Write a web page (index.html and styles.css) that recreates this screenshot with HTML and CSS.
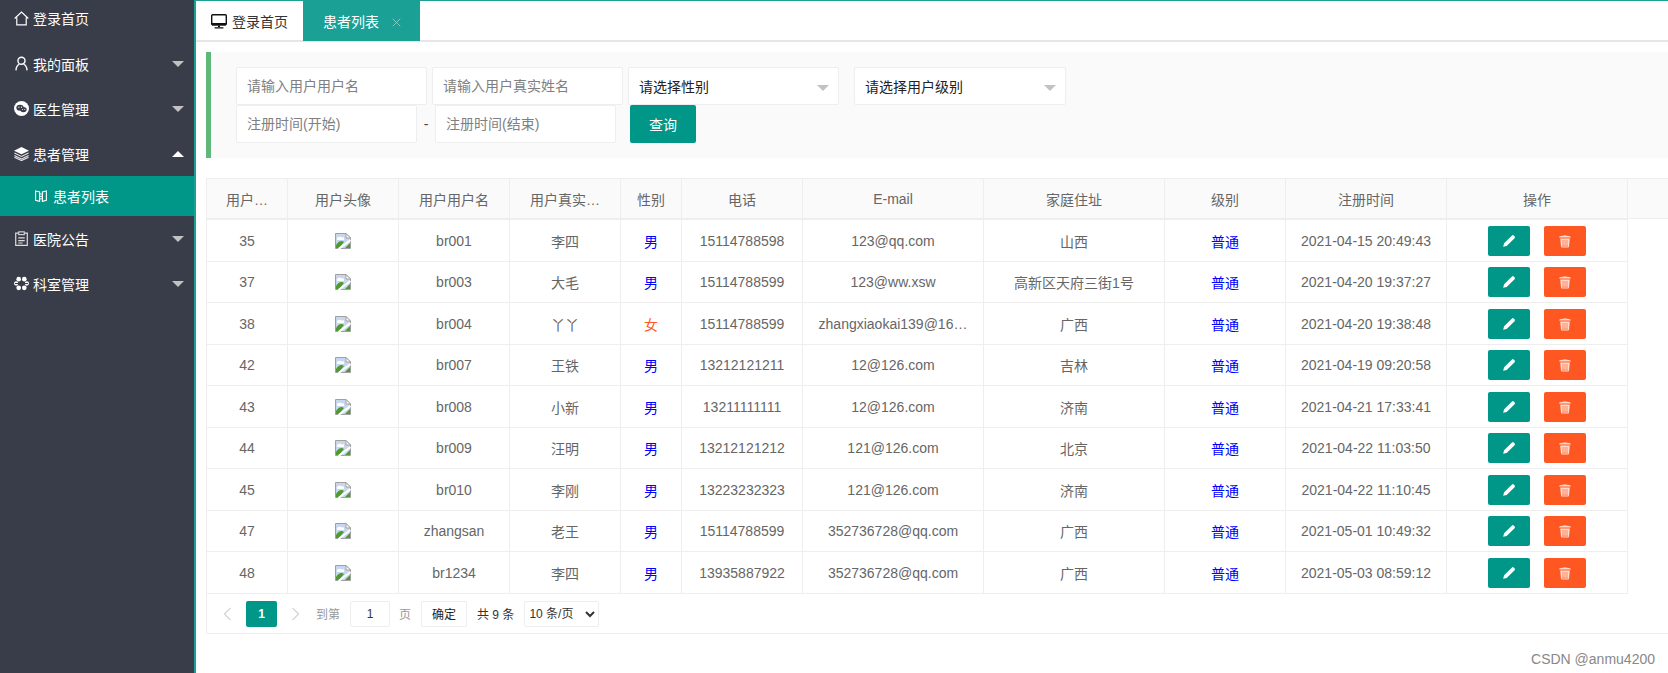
FILE: index.html
```html
<!DOCTYPE html>
<html lang="zh-CN">
<head>
    <meta charset="UTF-8">
    <title>患者列表</title>
    <link rel="stylesheet" href="styles.css">
</head>
<body>
    <svg class="defs" width="0" height="0">
        <symbol id="broken" viewBox="0 0 16 16">
            <path d="M0.5 0.5H11L15.5 5V15.5H0.5Z" fill="#c9d7ee" stroke="#a0a0a0"/>
            <path d="M11 0.5V5H15.5Z" fill="#fff" stroke="#a0a0a0"/>
            <path d="M2 5q2-2 4-1t3 0v3H2Z" fill="#fff"/>
            <path d="M1 15V12Q5 6 9 9L4 15Z" fill="#4f9a2f"/>
            <path d="M10 15L15 10V15Z" fill="#4f9a2f"/>
            <path d="M3.5 16L15.5 7" stroke="#fff" stroke-width="2"/>
        </symbol>
        <symbol id="pen" viewBox="0 0 12 12">
            <path d="M1 11L1.8 8L8.6 1.2Q9.4 0.6 10.2 1.4L10.8 2Q11.4 2.8 10.8 3.6L4 10.2Z" fill="#fff"/>
        </symbol>
        <symbol id="trash" viewBox="0 0 14 14">
            <path d="M1 3.6Q1 2 3 2L5 1.8Q7 0.6 9 1.8L11 2Q13 2 13 3.6Z" fill="#ffd9cb"/>
            <path d="M2.2 4.6H11.8L11 12.4Q11 13.4 10 13.4H4Q3 13.4 3 12.4Z" fill="#ffd9cb"/>
            <path d="M5 6V11M7 6V11M9 6V11" stroke="#ff8a63" stroke-width="1"/>
            <path d="M4 12H10" stroke="#ff5722" stroke-width="0.8"/>
        </symbol>
    </svg>

    <div class="layout">
        <div class="side">
            <div class="nav-item first">
                <svg class="nav-icon" viewBox="0 0 14 14"><path d="M0.6 7L7 1L13.4 7M2.6 6V13H11.4V6M2.6 13H11.4" fill="none" stroke="#fff" stroke-width="1.1"/></svg>
                <span>登录首页</span>
            </div>
            <div class="nav-item">
                <svg class="nav-icon" viewBox="0 0 14 14"><circle cx="7" cy="4.4" r="3.3" fill="none" stroke="#fff" stroke-width="1.3"/><path d="M1.8 13.4Q2.2 8.6 5 7.8M12.2 13.4Q11.8 8.6 9 7.8" fill="none" stroke="#fff" stroke-width="1.3"/></svg>
                <span>我的面板</span>
                <i class="arrow"></i>
            </div>
            <div class="nav-item">
                <svg class="nav-icon" viewBox="0 0 14 14"><circle cx="7" cy="7" r="7" fill="#fff"/><ellipse cx="5.6" cy="6.2" rx="3.4" ry="2.8" fill="#393d49"/><ellipse cx="8.8" cy="8" rx="3" ry="2.4" fill="#393d49"/><circle cx="4.6" cy="5.8" r=".6" fill="#fff"/><circle cx="7" cy="5.8" r=".6" fill="#fff"/><circle cx="8" cy="8" r=".5" fill="#fff"/><circle cx="10" cy="8" r=".5" fill="#fff"/></svg>
                <span>医生管理</span>
                <i class="arrow"></i>
            </div>
            <div class="nav-item">
                <svg class="nav-icon" viewBox="0 0 14 14"><path d="M7 1L14 4.4L7 7.8L0 4.4Z" fill="#fff"/><path d="M0.4 6.6L7 9.8L13.6 6.6M0.4 8.8L7 12L13.6 8.8M0.4 10.6L7 13.6L13.6 10.6" fill="none" stroke="#e8e8e8" stroke-width="1"/></svg>
                <span>患者管理</span>
                <i class="arrow up"></i>
            </div>
            <div class="nav-sub">
                <svg class="sub-icon" viewBox="0 0 12 12"><path d="M0.6 1L4.6 2V11.4L0.6 10.4ZM11.4 1L7.4 2V11.4L11.4 10.4Z" fill="none" stroke="#fff" stroke-width="1.1"/><path d="M4.6 4H7.4M4.6 6.4H7.4M4.6 8.8H7.4" stroke="#fff" stroke-width=".9"/></svg>
                <span>患者列表</span>
            </div>
            <div class="nav-item">
                <svg class="nav-icon" viewBox="0 0 14 14"><path d="M4 2H1.6V13.4H12.4V2H10" fill="none" stroke="#ddd" stroke-width="1.1"/><rect x="4.4" y="0.8" width="5.2" height="2.6" fill="none" stroke="#ddd"/><path d="M4 6.4H10M4 9H10M4 11.2H8" stroke="#ddd"/></svg>
                <span>医院公告</span>
                <i class="arrow"></i>
            </div>
            <div class="nav-item">
                <svg class="nav-icon" viewBox="0 0 14 14"><g fill="#fff"><circle cx="4.4" cy="3" r="2.2"/><circle cx="9.6" cy="3" r="2.2"/><circle cx="4.4" cy="11" r="2.2"/><circle cx="9.6" cy="11" r="2.2"/><circle cx="2" cy="7" r="2"/><circle cx="12" cy="7" r="2"/></g><path d="M7 1V13M1 7H13" stroke="#393d49" stroke-width="1"/></svg>
                <span>科室管理</span>
                <i class="arrow"></i>
            </div>
        </div>

        <div class="main">
            <div class="tabs">
                <div class="tab">
                    <svg class="tab-icon" viewBox="0 0 16 15"><rect x="0.7" y="0.7" width="14.6" height="10" rx="1" fill="none" stroke="#111" stroke-width="1.4"/><rect x="1" y="9" width="14" height="2.4" fill="#111"/><path d="M7 11.4H9V13H7ZM3.6 13.2H12.4V14.4H3.6Z" fill="#111"/></svg>
                    <span>登录首页</span>
                </div>
                <div class="tab active">
                    <span>患者列表</span>
                    <svg class="tab-close" viewBox="0 0 10 10"><path d="M0.8 0.8L9.2 9.2M9.2 0.8L0.8 9.2" stroke="#8fd0c9" stroke-width="1"/></svg>
                </div>
            </div>

            <div class="search">
                <div class="search-row">
                    <input class="field w191" placeholder="请输入用户用户名">
                    <input class="field w191" placeholder="请输入用户真实姓名">
                    <div class="select w211">请选择性别<i class="select-arrow"></i></div>
                    <div class="select w212">请选择用户级别<i class="select-arrow"></i></div>
                </div>
                <div class="search-row">
                    <input class="field w181" placeholder="注册时间(开始)">
                    <span class="dash">-</span>
                    <input class="field w181" placeholder="注册时间(结束)">
                    <button class="search-btn">查询</button>
                </div>
            </div>

            <div class="grid">
                <div class="grid-head">
                    <table>
                        <colgroup>
                            <col class="c-id"><col class="c-m"><col class="c-m"><col class="c-m"><col class="c-sex"><col class="c-tel"><col class="c-l"><col class="c-l"><col class="c-tel"><col class="c-time"><col class="c-l"><col class="c-gap">
                        </colgroup>
                        <tr>
                            <th>用户…</th><th>用户头像</th><th>用户用户名</th><th>用户真实…</th><th>性别</th><th>电话</th><th>E-mail</th><th>家庭住址</th><th>级别</th><th>注册时间</th><th>操作</th><th></th>
                        </tr>
                    </table>
                </div>
                <div class="grid-body">
                    <table>
                        <colgroup>
                            <col class="c-id"><col class="c-m"><col class="c-m"><col class="c-m"><col class="c-sex"><col class="c-tel"><col class="c-l"><col class="c-l"><col class="c-tel"><col class="c-time"><col class="c-l">
                        </colgroup>
                        <tr class="tall">
                            <td>35</td><td><svg class="avatar"><use href="#broken"/></svg></td><td>br001</td><td>李四</td><td class="blue">男</td><td>15114788598</td><td>123@qq.com</td><td>山西</td><td class="blue">普通</td><td>2021-04-15 20:49:43</td>
                            <td><div class="ops"><a class="op edit"><svg><use href="#pen"/></svg></a><a class="op del"><svg><use href="#trash"/></svg></a></div></td>
                        </tr>
                        <tr>
                            <td>37</td><td><svg class="avatar"><use href="#broken"/></svg></td><td>br003</td><td>大毛</td><td class="blue">男</td><td>15114788599</td><td>123@ww.xsw</td><td>高新区天府三街1号</td><td class="blue">普通</td><td>2021-04-20 19:37:27</td>
                            <td><div class="ops"><a class="op edit"><svg><use href="#pen"/></svg></a><a class="op del"><svg><use href="#trash"/></svg></a></div></td>
                        </tr>
                        <tr class="tall">
                            <td>38</td><td><svg class="avatar"><use href="#broken"/></svg></td><td>br004</td><td>丫丫</td><td class="red">女</td><td>15114788599</td><td>zhangxiaokai139@16…</td><td>广西</td><td class="blue">普通</td><td>2021-04-20 19:38:48</td>
                            <td><div class="ops"><a class="op edit"><svg><use href="#pen"/></svg></a><a class="op del"><svg><use href="#trash"/></svg></a></div></td>
                        </tr>
                        <tr>
                            <td>42</td><td><svg class="avatar"><use href="#broken"/></svg></td><td>br007</td><td>王铁</td><td class="blue">男</td><td>13212121211</td><td>12@126.com</td><td>吉林</td><td class="blue">普通</td><td>2021-04-19 09:20:58</td>
                            <td><div class="ops"><a class="op edit"><svg><use href="#pen"/></svg></a><a class="op del"><svg><use href="#trash"/></svg></a></div></td>
                        </tr>
                        <tr class="tall">
                            <td>43</td><td><svg class="avatar"><use href="#broken"/></svg></td><td>br008</td><td>小新</td><td class="blue">男</td><td>13211111111</td><td>12@126.com</td><td>济南</td><td class="blue">普通</td><td>2021-04-21 17:33:41</td>
                            <td><div class="ops"><a class="op edit"><svg><use href="#pen"/></svg></a><a class="op del"><svg><use href="#trash"/></svg></a></div></td>
                        </tr>
                        <tr>
                            <td>44</td><td><svg class="avatar"><use href="#broken"/></svg></td><td>br009</td><td>汪明</td><td class="blue">男</td><td>13212121212</td><td>121@126.com</td><td>北京</td><td class="blue">普通</td><td>2021-04-22 11:03:50</td>
                            <td><div class="ops"><a class="op edit"><svg><use href="#pen"/></svg></a><a class="op del"><svg><use href="#trash"/></svg></a></div></td>
                        </tr>
                        <tr class="tall">
                            <td>45</td><td><svg class="avatar"><use href="#broken"/></svg></td><td>br010</td><td>李刚</td><td class="blue">男</td><td>13223232323</td><td>121@126.com</td><td>济南</td><td class="blue">普通</td><td>2021-04-22 11:10:45</td>
                            <td><div class="ops"><a class="op edit"><svg><use href="#pen"/></svg></a><a class="op del"><svg><use href="#trash"/></svg></a></div></td>
                        </tr>
                        <tr>
                            <td>47</td><td><svg class="avatar"><use href="#broken"/></svg></td><td>zhangsan</td><td>老王</td><td class="blue">男</td><td>15114788599</td><td>352736728@qq.com</td><td>广西</td><td class="blue">普通</td><td>2021-05-01 10:49:32</td>
                            <td><div class="ops"><a class="op edit"><svg><use href="#pen"/></svg></a><a class="op del"><svg><use href="#trash"/></svg></a></div></td>
                        </tr>
                        <tr class="tall">
                            <td>48</td><td><svg class="avatar"><use href="#broken"/></svg></td><td>br1234</td><td>李四</td><td class="blue">男</td><td>13935887922</td><td>352736728@qq.com</td><td>广西</td><td class="blue">普通</td><td>2021-05-03 08:59:12</td>
                            <td><div class="ops"><a class="op edit"><svg><use href="#pen"/></svg></a><a class="op del"><svg><use href="#trash"/></svg></a></div></td>
                        </tr>
                    </table>
                </div>
                <div class="pager">
                    <svg class="chev" viewBox="0 0 9 16"><path d="M8 1L1 8L8 15" fill="none" stroke="#d2d2d2" stroke-width="1.4"/></svg>
                    <span class="page-now">1</span>
                    <svg class="chev next" viewBox="0 0 9 16"><path d="M1 1L8 8L1 15" fill="none" stroke="#d2d2d2" stroke-width="1.4"/></svg>
                    <span class="skip">到第</span>
                    <input class="page-input" value="1">
                    <span class="skip">页</span>
                    <button class="page-ok">确定</button>
                    <span class="count">共 9 条</span>
                    <select class="page-size"><option>10 条/页</option></select>
                </div>
            </div>
        </div>
    </div>
    <div class="mark">CSDN @anmu4200</div>
</body>
</html>
```

FILE: styles.css
```css
* {
    margin: 0;
    padding: 0;
    box-sizing: border-box;
}

html, body {
    height: 100%;
    overflow: hidden;
}

body {
    font-family: "Liberation Sans", "Noto Sans CJK SC", sans-serif;
    font-size: 14px;
    color: #666;
    background: #fff;
}

.defs {
    position: absolute;
}

.layout {
    display: flex;
    height: 100%;
}

/* sidebar */
.side {
    width: 196px;
    flex: none;
    background: #393d49;
    border-right: 2px solid #1aa094;
    color: #fff;
}

.nav-item {
    height: 45px;
    display: flex;
    align-items: center;
    padding-left: 14px;
    position: relative;
}

.nav-item.first {
    height: 41px;
    padding-bottom: 5px;
}

.nav-icon {
    width: 15px;
    height: 15px;
    margin-right: 4px;
    flex: none;
}

.arrow {
    position: absolute;
    right: 10px;
    top: 20px;
    border-left: 6px solid transparent;
    border-right: 6px solid transparent;
    border-top: 6px solid #c2c2c2;
}

.arrow.up {
    border-top: none;
    border-bottom: 6px solid #fff;
}

.nav-sub {
    height: 40px;
    background: #009688;
    display: flex;
    align-items: center;
    padding-left: 35px;
}

.sub-icon {
    width: 12px;
    height: 12px;
    margin-right: 6px;
    flex: none;
}

/* tabs */
.main {
    flex: 1;
    min-width: 0;
    border-top: 1px solid #1aa094;
}

.tabs {
    height: 41px;
    display: flex;
    border-bottom: 2px solid #e6e6e6;
    color: #333;
}

.tab {
    width: 107px;
    height: 40px;
    display: flex;
    align-items: center;
    padding-left: 15px;
}

.tab-icon {
    width: 16px;
    height: 15px;
    margin-right: 5px;
}

.tab.active {
    width: 117px;
    background: #1aa094;
    color: #fff;
    padding-left: 20px;
}

.tab-close {
    width: 9px;
    height: 9px;
    margin-left: 13px;
    margin-top: 2px;
}

/* search form */
.search {
    height: 106px;
    margin: 10px 0 20px 10px;
    padding: 15px 0 0 25px;
    background: #fafafa;
    border-left: 5px solid #5fb878;
}

.search-row {
    display: flex;
    align-items: center;
    height: 38px;
    gap: 5px;
}

.field, .select {
    height: 38px;
    border: 1px solid #eee;
    background: #fff;
    font: inherit;
    border-radius: 2px;
    padding-left: 10px;
    outline: none;
}

.field::placeholder {
    color: #808080;
    opacity: 1;
}

.w191 { width: 191px; }
.w181 { width: 181px; }
.w211 { width: 211px; }
.w212 { width: 212px; margin-left: 10px; }

.select {
    position: relative;
    display: flex;
    align-items: center;
    color: #222;
}

.select-arrow {
    position: absolute;
    right: 9px;
    top: 17px;
    border-left: 6px solid transparent;
    border-right: 6px solid transparent;
    border-top: 6px solid #c2c2c2;
}

.dash {
    width: 8px;
    text-align: center;
    color: #444;
}

.search-btn {
    width: 66px;
    height: 38px;
    margin-left: 9px;
    border: none;
    border-radius: 2px;
    background: #009688;
    color: #fff;
    font: inherit;
}

/* data table */
.grid {
    margin-left: 10px;
}

.grid table {
    table-layout: fixed;
    border-collapse: collapse;
}

.grid-head table { width: 1462px; }
.grid-body table { width: 1421px; }

.c-id { width: 81px; }
.c-m { width: 111px; }
.c-sex { width: 61px; }
.c-tel { width: 121px; }
.c-l { width: 181px; }
.c-time { width: 161px; }
.c-gap { width: 41px; }

.grid-head {
    background: #fafafa;
    overflow: hidden;
}

th, td {
    border: 1px solid #eee;
    text-align: center;
    white-space: nowrap;
    overflow: hidden;
    font-weight: normal;
}

th {
    height: 40px;
}

.grid-head tr {
    border-left: none;
}

td {
    height: 41px;
}

tr.tall td {
    height: 42px;
}

.grid-head th:last-child {
    border-right: none;
}

.blue { color: #0000ff; }
.red { color: #ff5722; }

.avatar {
    display: block;
    width: 16px;
    height: 16px;
    margin: 0 auto;
}

.ops {
    display: flex;
    justify-content: center;
    gap: 14px;
}

.op {
    width: 42px;
    height: 30px;
    border-radius: 2px;
    display: flex;
    align-items: center;
    justify-content: center;
}

.op svg {
    width: 14px;
    height: 14px;
}

.op.edit { background: #009688; }
.op.del { background: #ff5722; }

/* pager */
.pager {
    height: 40px;
    border: 1px solid #eee;
    border-top: none;
    border-right: none;
    display: flex;
    align-items: center;
    padding-left: 16px;
    font-size: 12px;
}

.chev {
    width: 9px;
    height: 14px;
    flex: none;
}

.page-now {
    width: 31px;
    height: 26px;
    margin-left: 14px;
    background: #009688;
    color: #fff;
    font-weight: bold;
    border-radius: 2px;
    text-align: center;
    line-height: 26px;
}

.chev.next {
    margin-left: 14px;
}

.skip {
    margin-left: 16px;
    color: #999;
    font-size: 12px;
}

.page-input {
    width: 40px;
    height: 26px;
    margin-left: 10px;
    margin-right: -7px;
    border: 1px solid #eee;
    border-radius: 2px;
    text-align: center;
    font: inherit;
    color: #333;
}

.page-ok {
    width: 46px;
    height: 26px;
    margin-left: 10px;
    border: 1px solid #eee;
    border-radius: 2px;
    background: #fff;
    font: inherit;
    color: #222;
}

.count {
    margin-left: 10px;
    color: #333;
}

.page-size {
    width: 75px;
    height: 26px;
    margin-left: 10px;
    border: 1px solid #eee;
    border-radius: 2px;
    background: #fff;
    font: inherit;
    color: #333;
}

.mark {
    position: absolute;
    right: 13px;
    bottom: 6px;
    color: #888;
    font-size: 14px;
}
```
